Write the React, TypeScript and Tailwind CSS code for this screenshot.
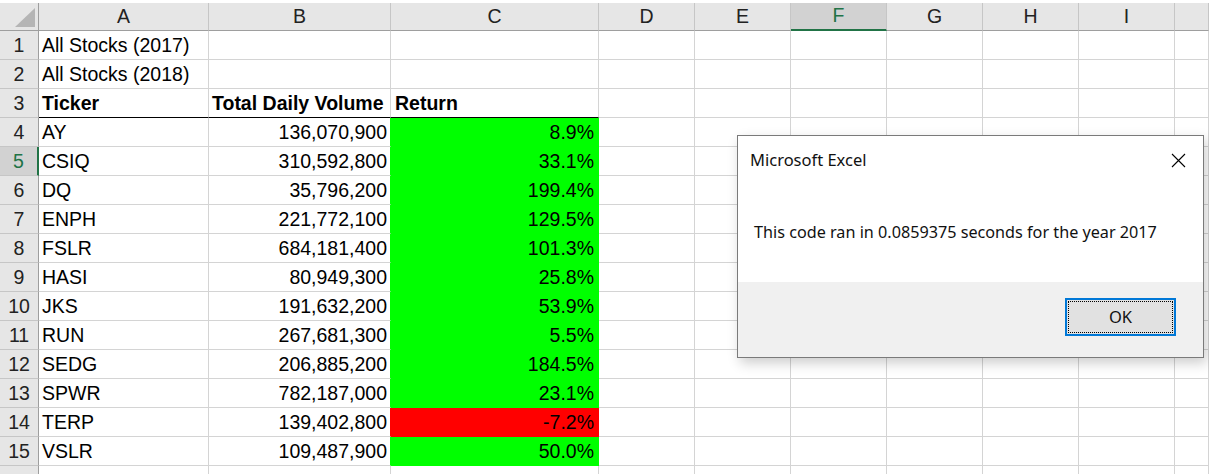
import React from 'react';

const COLS = ['A', 'B', 'C', 'D', 'E', 'F', 'G', 'H', 'I', ''];

type Row = { a: string; b?: string; c?: string; fill?: 'g' | 'r'; bold?: boolean };

const ROWS: Row[] = [
  { a: 'All Stocks (2017)' },
  { a: 'All Stocks (2018)' },
  { a: 'Ticker', b: 'Total Daily Volume', c: 'Return', bold: true },
  { a: 'AY', b: '136,070,900', c: '8.9%', fill: 'g' },
  { a: 'CSIQ', b: '310,592,800', c: '33.1%', fill: 'g' },
  { a: 'DQ', b: '35,796,200', c: '199.4%', fill: 'g' },
  { a: 'ENPH', b: '221,772,100', c: '129.5%', fill: 'g' },
  { a: 'FSLR', b: '684,181,400', c: '101.3%', fill: 'g' },
  { a: 'HASI', b: '80,949,300', c: '25.8%', fill: 'g' },
  { a: 'JKS', b: '191,632,200', c: '53.9%', fill: 'g' },
  { a: 'RUN', b: '267,681,300', c: '5.5%', fill: 'g' },
  { a: 'SEDG', b: '206,885,200', c: '184.5%', fill: 'g' },
  { a: 'SPWR', b: '782,187,000', c: '23.1%', fill: 'g' },
  { a: 'TERP', b: '139,402,800', c: '-7.2%', fill: 'r' },
  { a: 'VSLR', b: '109,487,900', c: '50.0%', fill: 'g' },
  { a: '' },
];

function Dialog() {
  return (
    <div className="absolute left-[737px] top-[135px] w-[467px] h-[223px] bg-white border border-[#7a7a7a] shadow-[3px_5px_12px_rgba(0,0,0,0.2)] flex flex-col font-['Noto_Sans',sans-serif] text-[#111]">
      <div className="h-[48px] flex items-center justify-between pl-[12px] pr-[17px]">
        <span className="text-[16.5px]">Microsoft Excel</span>
        <svg width="15" height="15" viewBox="0 0 15 15" className="text-black">
          <path d="M1 1 L14 14 M14 1 L1 14" stroke="currentColor" strokeWidth="1.1" fill="none" />
        </svg>
      </div>
      <div className="flex-1 flex items-center pl-[16px] pb-[2px]">
        <span className="text-[16.2px]">This code ran in 0.0859375 seconds for the year 2017</span>
      </div>
      <div className="h-[75px] bg-[#f0f0f0] flex items-start justify-end pt-[16px] pr-[27px]">
        <button className="relative w-[111px] h-[38px] bg-[#e1e1e1] border-2 border-[#0078d7] text-[16.5px] flex items-center justify-center">
          <span className="absolute inset-[1px] border border-dotted border-black" />
          OK
        </button>
      </div>
    </div>
  );
}

export default function App() {
  return (
    <div className="relative w-[1209px] h-[474px] overflow-hidden bg-white font-['Liberation_Sans',Arial,sans-serif] text-[19.5px] text-black">
      <div className="pt-[3px] grid grid-cols-[39px_170px_182px_208px_96px_96px_96px_96px_96px_96px_34px] auto-rows-[29px] grid-rows-[28px]">
        {/* corner */}
        <div className="relative bg-[#e6e6e6] border-r border-b border-[#9e9e9e]">
          <div className="absolute right-[3px] bottom-[3px] w-0 h-0 border-l-[20px] border-l-transparent border-b-[19px] border-b-[#b5b5b5]" />
        </div>
        {COLS.map((c, i) =>
          c === 'F' ? (
            <div key={i} className="bg-[#d2d2d2] border-r border-r-[#c6c6c6] border-b-2 border-b-[#217346] text-[#217346] flex items-center justify-center">
              {c}
            </div>
          ) : (
            <div key={i} className="bg-[#e6e6e6] border-r border-r-[#c6c6c6] border-b border-b-[#9e9e9e] text-[#222] flex items-center justify-center">
              {c}
            </div>
          )
        )}

        {ROWS.map((r, idx) => {
          const n = idx + 1;
          const fillCls = r.fill === 'g' ? 'bg-[#00ff00] border-[#00ff00]' : r.fill === 'r' ? 'bg-[#ff0000] border-[#ff0000]' : '';
          const bRight = r.fill === 'g' ? 'border-r-[#00ff00]' : r.fill === 'r' ? 'border-r-[#ff0000]' : 'border-r-[#d4d4d4]';
          const under = n === 3 ? 'border-b-black' : 'border-b-[#d4d4d4]';
          const weight = r.bold ? 'font-bold' : '';
          return (
            <React.Fragment key={n}>
              {n === 5 ? (
                <div className="bg-[#d2d2d2] border-r-2 border-r-[#217346] border-b border-b-[#c6c6c6] text-[#217346] flex items-center justify-center pt-[2px]">
                  {n}
                </div>
              ) : (
                <div className="bg-[#e6e6e6] border-r border-r-[#9e9e9e] border-b border-b-[#c6c6c6] text-[#222] flex items-center justify-center pt-[2px]">
                  {n < 16 ? n : null}
                </div>
              )}
              <div className={`border-r border-r-[#d4d4d4] border-b ${under} ${weight} flex items-center px-[3px] pt-[2px] whitespace-nowrap`}>
                {r.a}
              </div>
              <div className={`border-r ${bRight} border-b ${under} ${weight} flex items-center px-[3px] pt-[2px] whitespace-nowrap ${r.bold ? 'justify-start' : 'justify-end'}`}>
                {r.b}
              </div>
              <div className={`border-r border-b ${fillCls || `border-r-[#d4d4d4] ${under}`} ${weight} flex items-center px-[4px] pt-[2px] whitespace-nowrap ${r.bold ? 'justify-start' : 'justify-end'}`}>
                {r.c}
              </div>
              {Array.from({ length: 7 }).map((_, k) => (
                <div key={k} className="border-r border-b border-[#d4d4d4]" />
              ))}
            </React.Fragment>
          );
        })}
      </div>
      <Dialog />
    </div>
  );
}
